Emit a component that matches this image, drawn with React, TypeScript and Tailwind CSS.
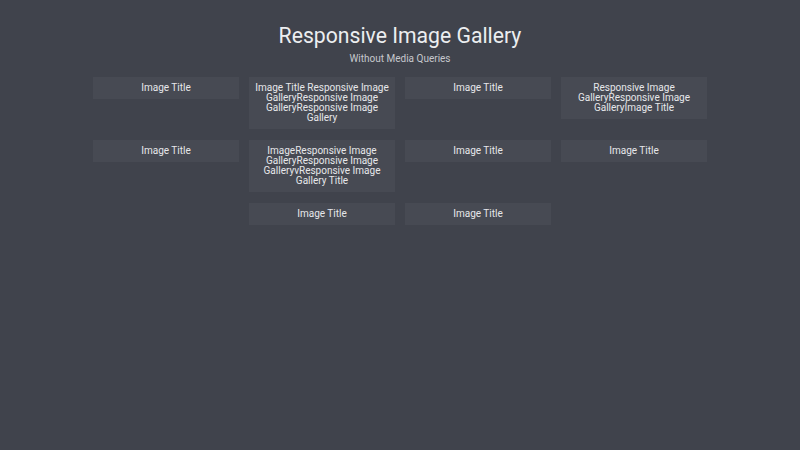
const items = [
  'Image Title',
  'Image Title Responsive Image GalleryResponsive Image GalleryResponsive Image Gallery',
  'Image Title',
  'Responsive Image GalleryResponsive Image GalleryImage Title',
  'Image Title',
  'ImageResponsive Image GalleryResponsive Image GalleryvResponsive Image Gallery Title',
  'Image Title',
  'Image Title',
  'Image Title',
  'Image Title',
]

export default function App() {
  return (
    <div className="min-h-screen w-full bg-[#40434c] text-[#e4e5e8] font-['Roboto',sans-serif]">
      <header className="pt-[22px] text-center">
        <h1 className="text-[21.2px] leading-[28px] text-[#eceef0]">Responsive Image Gallery</h1>
        <p className="mt-[2px] text-[10px] leading-[14px] text-[#c6c8cd]">Without Media Queries</p>
      </header>
      <div className="mx-auto mt-[11px] flex w-[614px] flex-wrap items-start justify-center gap-x-[10px] gap-y-[11px]">
        {items.map((title, i) => (
          <div
            key={i}
            className="w-[146px] bg-[#474a53] px-[5px] py-[6px] text-center text-[10px] leading-[10px] text-[#e6e7ea]"
          >
            {title}
          </div>
        ))}
      </div>
    </div>
  )
}
